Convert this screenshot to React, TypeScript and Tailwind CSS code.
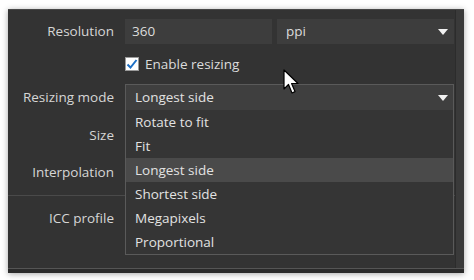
import React from 'react'

const modes = ['Rotate to fit', 'Fit', 'Longest side', 'Shortest side', 'Megapixels', 'Proportional']

function Arrow() {
  return (
    <svg width="10" height="6" viewBox="0 0 10 6" className="shrink-0">
      <path d="M0 0 H10 L5 6 Z" fill="#f2f2f2" />
    </svg>
  )
}

function Label({ children, className = '' }: { children: React.ReactNode; className?: string }) {
  return (
    <div className={`flex items-center justify-end pr-[11px] text-[13.5px] text-[#d6d6d6] ${className}`}>
      {children}
    </div>
  )
}

export default function App() {
  const selected = 'Longest side'

  return (
    <div className="relative h-[280px] w-[474px] bg-white pt-[9px] pl-[8px] font-['Segoe_UI','Open_Sans',sans-serif]">
      <div className="flex h-[264px] w-[456px] flex-col border-t border-[#484848] bg-[#333333] shadow-[0_1px_6px_rgba(0,0,0,0.35)]">
        <div className="flex flex-1">
          {/* main form */}
          <div className="relative w-[447px]">
            <div className="flex h-[34px] items-end">
              <Label className="h-[25px] w-[117px]">Resolution</Label>
              <div className="flex h-[25px] w-[147px] items-center bg-[#3d3d3d] pl-[7px] text-[13.5px] text-[#dcdcdc]">
                360
              </div>
              <div className="ml-[5px] flex h-[25px] w-[177px] items-center justify-between bg-[#3d3d3d] pr-[6px] pl-[9px] text-[13.5px] text-[#dcdcdc]">
                <span>ppi</span>
                <Arrow />
              </div>
            </div>

            <div className="flex h-[40px] items-center pl-[117px]">
              <div className="flex h-[14px] w-[14px] items-center justify-center border border-[#9a9a9a] bg-white">
                <svg width="12" height="12" viewBox="0 0 12 12">
                  <path d="M1.5 6.5 L4.5 9.5 L10.5 2" fill="none" stroke="#1d6fc4" strokeWidth="2" />
                </svg>
              </div>
              <span className="ml-[6px] text-[13.5px] text-[#dcdcdc]">Enable resizing</span>
            </div>

            <div className="flex h-[26px]">
              <Label className="w-[117px]">Resizing mode</Label>
              <div className="relative">
                <div className="flex h-[26px] w-[329px] items-center justify-between border border-b-0 border-[#5a5a5a] bg-[#3f3f3f] pr-[5px] pl-[9px] text-[13.5px] text-[#e2e2e2]">
                  <span>Longest side</span>
                  <Arrow />
                </div>
                {/* open dropdown list */}
                <div className="absolute top-full left-0 z-10 w-[329px] border border-t-0 border-[#5a5a5a] bg-[#353535]">
                  {modes.map((m) => (
                    <div
                      key={m}
                      className={`flex h-[24px] items-center pl-[9px] text-[13.5px] text-[#e2e2e2] ${
                        m === selected ? 'bg-[#4a4a4a]' : ''
                      }`}
                    >
                      {m}
                    </div>
                  ))}
                </div>
              </div>
            </div>

            <Label className="mt-[12px] h-[26px] w-[117px]">Size</Label>
            <Label className="mt-[11px] h-[26px] w-[117px]">Interpolation</Label>
            <div className="mt-[10px] h-px w-full bg-[#4a4a4a]" />
            <Label className="mt-[9px] h-[26px] w-[117px]">ICC profile</Label>

            {/* mouse pointer */}
            <svg
              className="absolute top-[59px] left-[275px] z-20"
              width="17"
              height="26"
              viewBox="0 0 17 26"
            >
              <path
                d="M1 1 L1 20 L5.5 15.5 L9 24 L12 22.6 L8.6 14.5 L15 14.5 Z"
                fill="white"
                stroke="black"
                strokeWidth="1.2"
                strokeLinejoin="round"
              />
            </svg>
          </div>
          {/* right edge strip */}
          <div className="w-[9px] border-l border-[#2c2c2c] bg-[#3a3a3a]" />
        </div>
        <div className="h-[5px] border-t border-[#555555] bg-[#2b2b2b]" />
      </div>
    </div>
  )
}
